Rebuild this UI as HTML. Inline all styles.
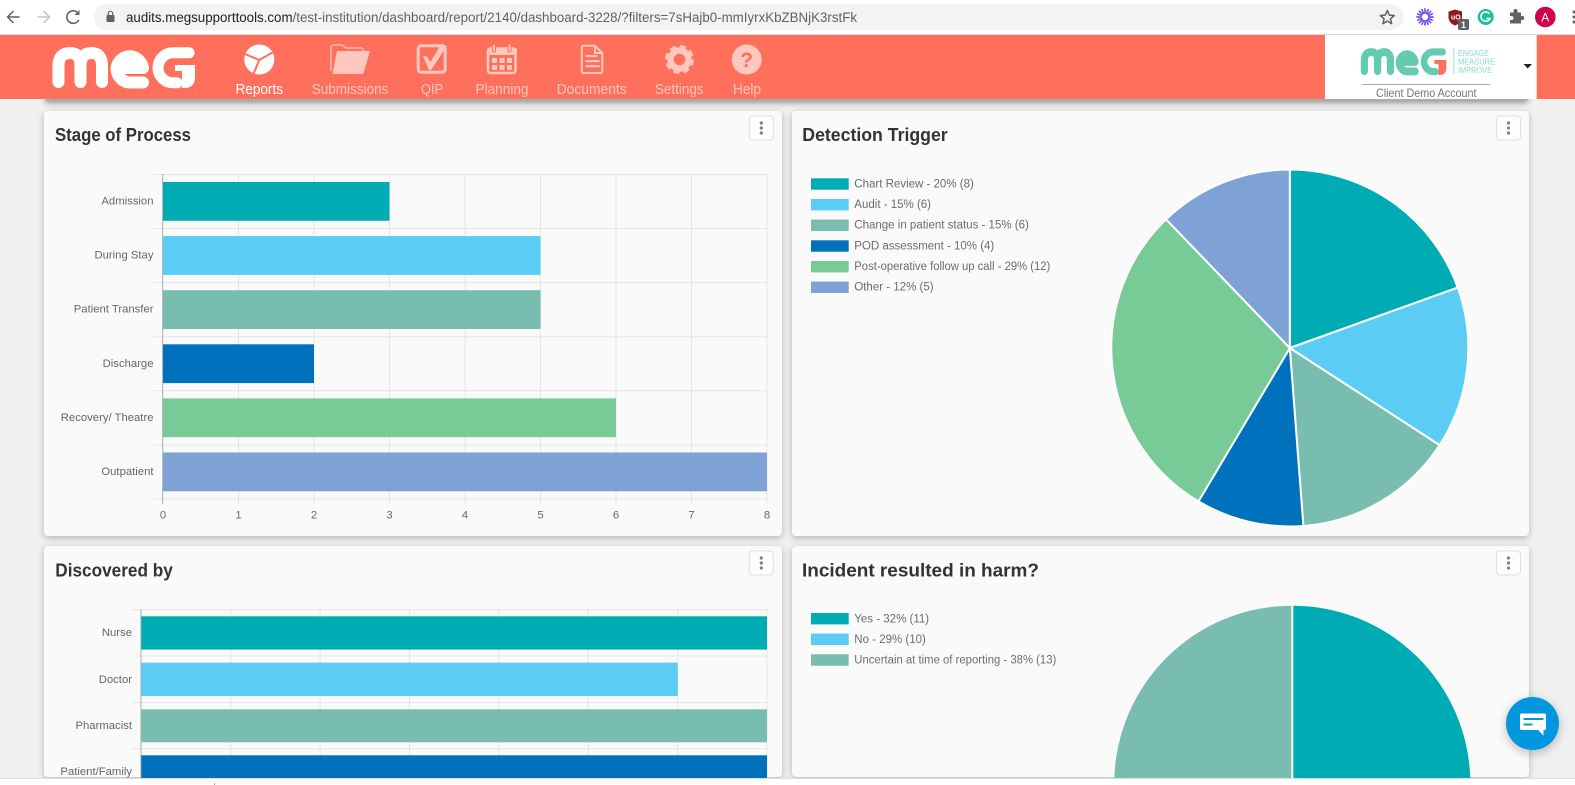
<!DOCTYPE html>
<html lang="en"><head><meta charset="utf-8"><title>Dashboard Report</title>
<style>
html,body{margin:0;padding:0;width:1575px;height:785px;overflow:hidden;background:#f0f0f0;font-family:"Liberation Sans",sans-serif}
body{position:relative}
.clip{position:absolute;left:0;top:0;width:1575px;height:785px;overflow:hidden}
.card{position:absolute;background:#fafafa;border-radius:4px;box-shadow:0 2px 7px rgba(0,0,0,.25)}
.back{position:absolute;left:45px;top:60px;width:1483px;height:41px;background:#aaa;border-radius:3px;box-shadow:0 2px 6px rgba(0,0,0,.38)}
svg.main{position:absolute;left:0;top:0;display:block;filter:blur(.3px)}
.chat{position:absolute;left:1506px;top:697px;width:53px;height:53px;border-radius:50%;background:#0097de;box-shadow:0 3px 10px rgba(0,0,0,.25)}
.chat svg{position:absolute;left:0;top:0}
</style></head><body>
<div class="clip">
<div class="back"></div>
<div class="card" style="left:44px;top:111.200px;width:737.500px;height:425px"></div>
<div class="card" style="left:791.700px;top:111.200px;width:737px;height:425px"></div>
<div class="card" style="left:44px;top:546.200px;width:737.500px;height:231px"></div>
<div class="card" style="left:791.700px;top:546.200px;width:737px;height:231px"></div>

<svg class="main" width="1575" height="785" viewBox="0 0 1575 785" xmlns="http://www.w3.org/2000/svg" font-family="'Liberation Sans',sans-serif">
<!-- Browser bar -->
<rect x="0" y="0" width="1575" height="35" fill="#fff"/>
<rect x="0" y="34" width="1575" height="1" fill="#d8d8de"/>
<rect x="94" y="4" width="1310" height="26" rx="13" fill="#f1f3f4"/>
<g fill="none" stroke-linecap="round" stroke-linejoin="round">
<path d="M19 17H8M13 11.500 7.500 17l5.500 5.500" stroke="#5f6368" stroke-width="1.500"/>
<path d="M38 17H49M44 11.500 49.500 17 44 22.500" stroke="#c2c5c9" stroke-width="1.500"/>
<path d="M78.500 20.500A6.300 6.300 0 1 1 78.600 13.800" stroke="#5f6368" stroke-width="1.600"/>
</g>
<path d="M79.500 10V15H74.500Z" fill="#5f6368"/>
<rect x="106.500" y="15" width="8" height="7" rx="1" fill="#5f6368"/>
<path d="M108.300 15.500V13.500A2.200 2.200 0 0 1 112.700 13.500V15.500" fill="none" stroke="#5f6368" stroke-width="1.200"/>
<text x="126" y="22" font-size="13.500" fill="#5f6368" textLength="731" lengthAdjust="spacingAndGlyphs"><tspan fill="#202124">audits.megsupporttools.com</tspan>/test-institution/dashboard/report/2140/dashboard-3228/?filters=7sHajb0-mmIyrxKbZBNjK3rstFk</text>
<path d="M1387.300 10.500l2 4.600 5 .4-3.800 3.300 1.200 4.900-4.400-2.600-4.300 2.600 1.100-4.900-3.800-3.300 5-.4z" fill="none" stroke="#5f6368" stroke-width="1.500" stroke-linejoin="round"/>
<g stroke="#7a4cf5" stroke-width="1.700" stroke-linecap="round"><path d="M1425 9V25M1417 17H1433M1419.300 11.300 1430.700 22.700M1430.700 11.300 1419.300 22.700M1421.900 9.700 1428.100 24.300M1428.100 9.700 1421.900 24.300M1417.700 13.900 1432.300 20.100M1432.300 13.900 1417.700 20.100"/></g>
<circle cx="1425" cy="17" r="3.200" fill="#fff"/>
<path d="M1448.500 11.500L1455 9.500 1462 11.500V17C1462 21 1459 24 1455 25.500 1451 24 1448.500 21 1448.500 17Z" fill="#8b1a22"/>
<text x="1451" y="19.500" font-size="7" font-weight="bold" fill="#fff">uO</text>
<rect x="1458" y="19" width="11" height="11" rx="1.500" fill="#5f6368"/>
<text x="1463.500" y="28" font-size="9" font-weight="bold" fill="#fff" text-anchor="middle">1</text>
<circle cx="1485.700" cy="17" r="8" fill="#15c39a"/>
<path d="M1489.500 13.800A4.700 4.700 0 1 0 1490 18.500H1486.300" fill="none" stroke="#fff" stroke-width="1.600"/>
<path d="M1510 12.500H1513.500V11A2 2 0 0 1 1517.500 11V12.500H1521V16H1522.300A2 2 0 0 1 1522.300 20H1521V23.500H1510V20H1511.500A2 2 0 0 0 1511.500 16H1510Z" fill="#5f6368"/>
<circle cx="1545.300" cy="17" r="10.300" fill="#d0024f"/>
<text x="1545.300" y="21.500" font-size="12" fill="#fff" text-anchor="middle">A</text>
<g fill="#5f6368"><circle cx="1574" cy="12" r="1.500"/><circle cx="1574" cy="17" r="1.500"/><circle cx="1574" cy="22" r="1.500"/></g>

<!-- Header -->
<rect x="0" y="35" width="1575" height="64" fill="#ff705c"/>
<g fill="none" stroke="#fff" stroke-width="12" stroke-linecap="round" stroke-linejoin="round">
<path d="M58.500 82V66Q58.500 53 70 53 80.500 53 80.500 66V82M80.500 66Q80.500 53 91.500 53 102 53 102 66V82"/>
<path d="M116.500 68H143A13.500 14.500 0 0 0 116.500 68 13.500 14.500 0 0 0 130 82.500H143"/>
</g>
<path d="M189 52.800H173A15 15 0 0 0 173 82.800H177" fill="none" stroke="#fff" stroke-width="11" stroke-linecap="round"/>
<path d="M175 65H195V77Q195 88 184 88H182V71H175Z" fill="#fff"/>

<!-- Reports -->
<circle cx="259.300" cy="59.500" r="15" fill="#fff"/>
<path d="M259.300 60L245 54M259.300 60L272.500 52.500M259.300 60L253 75" stroke="#ff705c" stroke-width="2" fill="none"/>
<!-- Folder -->
<g fill="#ffc7bd">
<path d="M331 71V47.500Q331 45 333.500 45H342.500L346 48H361Q363 48 363 50V51" fill="none" stroke="#ffc7bd" stroke-width="1.300"/>
<path d="M337 51H370L363.500 73.500Q363.200 74 362 74H332.500Z"/>
<!-- QIP -->
<rect x="418.200" y="45.800" width="27" height="26.500" rx="3" fill="none" stroke="#ffc7bd" stroke-width="3"/>
<path d="M423 56H426.500L430.500 62 440 46H447L431 70H429Z"/>
<!-- Calendar -->
<rect x="488" y="48.500" width="27.500" height="24.500" rx="2.500" fill="none" stroke="#ffc7bd" stroke-width="2.500"/>
<rect x="487" y="48" width="30" height="7" rx="2"/>
<rect x="492.500" y="44" width="3" height="8" rx="1.500" stroke="#ff705c" stroke-width="1"/>
<rect x="508" y="44" width="3" height="8" rx="1.500" stroke="#ff705c" stroke-width="1"/>
<rect x="492" y="58" width="5" height="5"/><rect x="499.500" y="58" width="5" height="5"/><rect x="507" y="58" width="5" height="5"/>
<rect x="492" y="65" width="5" height="5"/><rect x="499.500" y="65" width="5" height="5"/><rect x="507" y="65" width="5" height="5"/>
<!-- Documents -->
<path d="M584 45.800H595L602.300 53V70.500Q602.300 73 600 73H584Q581.800 73 581.800 70.500V48Q581.800 45.800 584 45.800ZM595 46V53H602" fill="none" stroke="#ffc7bd" stroke-width="2"/>
<rect x="585.500" y="55" width="12" height="2.200"/><rect x="585.500" y="60" width="14" height="2.200"/><rect x="585.500" y="65" width="14" height="2.200"/>
</g>
<!-- Gear -->
<circle cx="679.500" cy="59.500" r="9" fill="none" stroke="#ffc7bd" stroke-width="6.500"/>
<circle cx="679.500" cy="59.500" r="12.800" fill="none" stroke="#ffc7bd" stroke-width="3.400" stroke-dasharray="6 4.050"/>
<!-- Help -->
<circle cx="746.700" cy="59.500" r="15" fill="#ffc7bd"/>
<text x="746.700" y="67" font-size="21" font-weight="bold" fill="#ff705c" text-anchor="middle">?</text>

<g font-size="14.500" fill="#ffc7bd" text-anchor="start">
<text x="235.500" y="94" fill="#fff" textLength="47.500" lengthAdjust="spacingAndGlyphs">Reports</text>
<text x="311.700" y="94" textLength="76.700" lengthAdjust="spacingAndGlyphs">Submissions</text>
<text x="421" y="94" textLength="22" lengthAdjust="spacingAndGlyphs">QIP</text>
<text x="475.500" y="94" textLength="53" lengthAdjust="spacingAndGlyphs">Planning</text>
<text x="556.700" y="94" textLength="70" lengthAdjust="spacingAndGlyphs">Documents</text>
<text x="655" y="94" textLength="48.500" lengthAdjust="spacingAndGlyphs">Settings</text>
<text x="733" y="94" textLength="28" lengthAdjust="spacingAndGlyphs">Help</text>
</g>

<!-- Client box -->
<rect x="1325" y="35" width="211.700" height="64" fill="#fff"/>
<g transform="translate(1329.300 17.300) scale(.6 .656)">
<g fill="none" stroke="#62cbb0" stroke-width="12" stroke-linecap="round" stroke-linejoin="round">
<path d="M58.500 82V66Q58.500 53 70 53 80.500 53 80.500 66V82M80.500 66Q80.500 53 91.500 53 102 53 102 66V82"/>
<path d="M116.500 68H143A13.500 14.500 0 0 0 116.500 68 13.500 14.500 0 0 0 130 82.500H143"/>
</g>
<path d="M189 52.800H173A15 15 0 0 0 173 82.800H177" fill="none" stroke="#62cbb0" stroke-width="11" stroke-linecap="round"/>
<path d="M175 65H195V77Q195 88 184 88H182V71H175Z" fill="#ff705c"/>
</g>
<rect x="1453.300" y="48" width="1" height="26" fill="#a9e2d3"/>
<g font-size="8.500" fill="#8cdac5">
<text x="1458" y="56" textLength="31" lengthAdjust="spacingAndGlyphs">ENGAGE</text>
<text x="1458" y="64.500" textLength="37" lengthAdjust="spacingAndGlyphs">MEASURE</text>
<text x="1458" y="73" textLength="34" lengthAdjust="spacingAndGlyphs">IMPROVE</text>
</g>
<rect x="1362" y="84" width="128" height="1" fill="#aaa"/>
<text x="1376" y="97" font-size="12" fill="#777" textLength="100.500" lengthAdjust="spacingAndGlyphs">Client Demo Account</text>
<path d="M1523.500 64H1532L1527.700 68.500Z" fill="#222"/>

<!-- Titles -->
<g font-size="18" font-weight="bold" fill="#333">
<text x="55" y="141" textLength="136" lengthAdjust="spacingAndGlyphs">Stage of Process</text>
<text x="802.300" y="141" textLength="145.400" lengthAdjust="spacingAndGlyphs">Detection Trigger</text>
<text x="55.300" y="576.500" textLength="117.500" lengthAdjust="spacingAndGlyphs">Discovered by</text>
<text x="802" y="576.500" textLength="237" lengthAdjust="spacingAndGlyphs">Incident resulted in harm?</text>
</g>

<!-- Kebabs -->
<g fill="#fdfdfd" stroke="#dfdfdf" stroke-width="1">
<rect x="749.300" y="116" width="24" height="24" rx="3.500"/>
<rect x="1496.500" y="116" width="24" height="24" rx="3.500"/>
<rect x="749.300" y="551" width="24" height="24" rx="3.500"/>
<rect x="1496.500" y="551" width="24" height="24" rx="3.500"/>
</g>
<g fill="#808080">
<circle cx="761.300" cy="123" r="1.600"/><circle cx="761.300" cy="128" r="1.600"/><circle cx="761.300" cy="133" r="1.600"/>
<circle cx="1508.500" cy="123" r="1.600"/><circle cx="1508.500" cy="128" r="1.600"/><circle cx="1508.500" cy="133" r="1.600"/>
<circle cx="761.300" cy="558" r="1.600"/><circle cx="761.300" cy="563" r="1.600"/><circle cx="761.300" cy="568" r="1.600"/>
<circle cx="1508.500" cy="558" r="1.600"/><circle cx="1508.500" cy="563" r="1.600"/><circle cx="1508.500" cy="568" r="1.600"/>
</g>

<!-- Chart 1 -->
<g stroke="#e5e5e5" stroke-width="1" fill="none">
<path d="M153.300 174.500H767M153.300 228.500H767M153.300 282.500H767M153.300 336.700H767M153.300 390.800H767M153.300 445H767M153.300 499H767"/>
<path d="M238.500 174V504M314 174V504M389.500 174V504M465 174V504M540.500 174V504M616 174V504M691.500 174V504M767 174V504"/>
</g>
<path d="M162.700 174V504" stroke="#aaa" stroke-width="1"/>
<rect x="163" y="182" width="226.500" height="38.800" fill="#00acb3"/>
<rect x="163" y="236.100" width="377.500" height="38.800" fill="#5bccf4"/>
<rect x="163" y="290.200" width="377.500" height="38.800" fill="#78bdb0"/>
<rect x="163" y="344.300" width="151" height="38.800" fill="#0072bd"/>
<rect x="163" y="398.400" width="453" height="38.800" fill="#78ca97"/>
<rect x="163" y="452.500" width="604" height="38.800" fill="#7ea1d6"/>
<g font-size="11.300" fill="#666" text-anchor="end">
<text x="153.500" y="204.500">Admission</text>
<text x="153.500" y="258.600">During Stay</text>
<text x="153.500" y="312.700">Patient Transfer</text>
<text x="153.500" y="366.800">Discharge</text>
<text x="153.500" y="420.900">Recovery/ Theatre</text>
<text x="153.500" y="475">Outpatient</text>
</g>
<g font-size="11.300" fill="#666" text-anchor="middle">
<text x="163" y="518.500">0</text><text x="238.500" y="518.500">1</text><text x="314" y="518.500">2</text><text x="389.500" y="518.500">3</text><text x="465" y="518.500">4</text><text x="540.500" y="518.500">5</text><text x="616" y="518.500">6</text><text x="691.500" y="518.500">7</text><text x="767" y="518.500">8</text>
</g>

<!-- Chart 2 -->
<g stroke="#e5e5e5" stroke-width="1" fill="none">
<path d="M132 609.700H767M132 656H767M132 702.600H767M132 748.800H767"/>
<path d="M230.700 609V778M320.100 609V778M409.500 609V778M498.900 609V778M588.300 609V778M677.700 609V778M767 609V778"/>
</g>
<path d="M141 609V778" stroke="#aaa" stroke-width="1"/>
<rect x="141.300" y="616.300" width="625.700" height="33.300" fill="#00acb3"/>
<rect x="141.300" y="662.600" width="536.400" height="33.400" fill="#5bccf4"/>
<rect x="141.300" y="709.300" width="625.700" height="33" fill="#78bdb0"/>
<rect x="141.300" y="755.300" width="625.700" height="25" fill="#0072bd"/>
<g font-size="11.300" fill="#666" text-anchor="end">
<text x="132" y="636">Nurse</text>
<text x="132" y="683">Doctor</text>
<text x="132" y="729">Pharmacist</text>
<text x="132" y="775">Patient/Family</text>
</g>

<!-- Legend 1 -->
<rect x="811" y="178.300" width="37.700" height="11.400" fill="#00acb3"/>
<rect x="811" y="199" width="37.700" height="11.400" fill="#5bccf4"/>
<rect x="811" y="219.600" width="37.700" height="11.400" fill="#78bdb0"/>
<rect x="811" y="240.300" width="37.700" height="11.400" fill="#0072bd"/>
<rect x="811" y="261" width="37.700" height="11.400" fill="#78ca97"/>
<rect x="811" y="281.600" width="37.700" height="11.400" fill="#7ea1d6"/>
<g font-size="11.500" fill="#6c6c6c">
<text x="854.300" y="187.500">Chart Review - 20% (8)</text>
<text x="854.300" y="208">Audit - 15% (6)</text>
<text x="854.300" y="228.700">Change in patient status - 15% (6)</text>
<text x="854.300" y="249.300">POD assessment - 10% (4)</text>
<text x="854.300" y="270" textLength="196" lengthAdjust="spacingAndGlyphs">Post-operative follow up call - 29% (12)</text>
<text x="854.300" y="290.700">Other - 12% (5)</text>
</g>

<!-- Pie 1 -->
<g stroke="#fff" stroke-width="2" stroke-linejoin="round">
<path d="M1289.800 348V169.500A178.500 178.500 0 0 1 1457.800 287.600Z" fill="#00acb3"/>
<path d="M1289.800 348L1457.800 287.600A178.500 178.500 0 0 1 1439.600 445.100Z" fill="#5bccf4"/>
<path d="M1289.800 348L1439.600 445.100A178.500 178.500 0 0 1 1303.400 526Z" fill="#78bdb0"/>
<path d="M1289.800 348L1303.400 526A178.500 178.500 0 0 1 1198.500 501.400Z" fill="#0072bd"/>
<path d="M1289.800 348L1198.500 501.400A178.500 178.500 0 0 1 1166.100 219.300Z" fill="#78ca97"/>
<path d="M1289.800 348L1166.100 219.300A178.500 178.500 0 0 1 1289.800 169.500Z" fill="#7ea1d6"/>
</g>

<!-- Legend 2 -->
<rect x="811" y="613" width="37.700" height="11.400" fill="#00acb3"/>
<rect x="811" y="633.600" width="37.700" height="11.400" fill="#5bccf4"/>
<rect x="811" y="654.300" width="37.700" height="11.400" fill="#78bdb0"/>
<g font-size="11.500" fill="#6c6c6c">
<text x="854.300" y="622.500">Yes - 32% (11)</text>
<text x="854.300" y="643">No - 29% (10)</text>
<text x="854.300" y="663.700" textLength="202" lengthAdjust="spacingAndGlyphs">Uncertain at time of reporting - 38% (13)</text>
</g>

<!-- Pie 2 (cut off at the viewport strip) -->
<path d="M1292.300 780V605.700A178 178 0 0 1 1470.300 780Z" fill="#00acb3"/>
<path d="M1292.300 780V605.700A178 178 0 0 0 1114.300 780Z" fill="#78bdb0"/>
<path d="M1292.300 605V780" stroke="#fff" stroke-width="2" fill="none"/>

<!-- Bottom strip -->
<rect x="0" y="778" width="1575" height="7" fill="#fff"/>
<rect x="0" y="778" width="1575" height="1" fill="#dedede"/>
<rect x="214" y="783" width="1" height="2" fill="#999"/>
</svg>

<div class="chat">
<svg width="53" height="53" viewBox="0 0 53 53" xmlns="http://www.w3.org/2000/svg">
<path d="M15.500 16.500H38.500Q40 16.500 40 18V31.500Q40 33 38.500 33H37.500V38.500L32 33H15.500Q14 33 14 31.500V18Q14 16.500 15.500 16.500Z" fill="#fff"/>
<rect x="17.500" y="21" width="20" height="2" fill="#0097de"/>
<rect x="17.500" y="26.500" width="9" height="2" fill="#0097de"/>
</svg>
</div>
</div>
</body></html>
